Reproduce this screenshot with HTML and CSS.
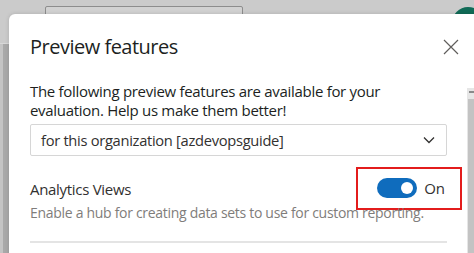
FILE: index.html
```html
<!DOCTYPE html>
<html lang="en">
  <head>
    <meta charset="UTF-8" />
    <title>Preview features</title>
    <link rel="stylesheet" href="styles.css">
  </head>
  <body>
    <header class="top-bar">
      <div class="search-box"></div>
      <div class="avatar"></div>
    </header>
    <div class="side-rail"></div>

    <!-- Dialog overlays the page -->
    <section class="dialog">
      <div class="dialog-header">
        <h1>Preview features</h1>
        <button class="close-btn" aria-label="Close">
          <svg width="16" height="16" viewBox="0 0 16 16">
            <path d="M1 1 L15 15 M15 1 L1 15" stroke="#605e5c" stroke-width="1.2" fill="none" />
          </svg>
        </button>
      </div>

      <div class="dialog-body">
        <p class="intro">The following preview features are available for your evaluation. Help us make them better!</p>

        <div class="scope-select">
          <span>for this organization [azdevopsguide]</span>
          <svg width="12" height="8" viewBox="0 0 12 8">
            <path d="M1 1.5 L6 6.5 L11 1.5" stroke="#323130" stroke-width="1.3" fill="none" />
          </svg>
        </div>

        <div class="feature">
          <div class="feature-row">
            <span class="feature-name">Analytics Views</span>
            <div class="toggle-wrap">
              <span class="toggle"><span class="knob"></span></span>
              <span class="toggle-label">On</span>
            </div>
          </div>
          <p class="feature-desc">Enable a hub for creating data sets to use for custom reporting.</p>
        </div>

        <hr class="divider">
      </div>

      <div class="scrollbar">
        <span class="scroll-arrow"></span>
        <span class="scroll-thumb"></span>
      </div>
    </section>
  </body>
</html>
```

FILE: styles.css
```css
* {
  margin: 0;
  padding: 0;
  box-sizing: border-box;
}

body {
  width: 474px;
  height: 253px;
  overflow: hidden;
  background-color: #b9b9b9;
  font-family: "Open Sans", "Noto Sans", sans-serif;
  color: #201f1e;
  position: relative;
}

/* page behind the dialog */
.top-bar {
  height: 44px;
  background-color: #cbcbcb;
  border-bottom: 1px solid #d8d8d8;
  position: relative;
}

.search-box {
  position: absolute;
  left: 45px;
  top: 6px;
  width: 198px;
  height: 20px;
  border: 1px solid #8d8d8d;
  border-radius: 2px;
  background-color: #d2d2d2;
}

.avatar {
  position: absolute;
  right: -10px;
  top: 7px;
  width: 32px;
  height: 32px;
  border-radius: 50%;
  background-color: #116b57;
}

.side-rail {
  width: 9px;
  height: 209px;
  background: linear-gradient(to right, #c4c4c4 0 3px, #a9a9a9 3px);
}

/* dialog */
.dialog {
  position: absolute;
  left: 9px;
  top: 14px;
  width: 480px;
  height: 260px;
  background-color: #ffffff;
  border-radius: 6px 0 0 0;
  box-shadow: 0 0 4px rgba(0, 0, 0, 0.15);
}

.dialog-header {
  display: flex;
  justify-content: space-between;
  align-items: center;
  padding: 19px 0 0 21px;
  width: 458px;
}

.dialog-header h1 {
  font-size: 20px;
  font-weight: 400;
  line-height: 28px;
  letter-spacing: -0.5px;
}

.close-btn {
  border: none;
  background: none;
  width: 16px;
  height: 16px;
  margin-right: 8px;
  display: flex;
}

.dialog-body {
  padding: 21px 0 0 21px;
  width: 438px;
}

.intro {
  font-size: 15px;
  line-height: 19px;
  font-weight: 500;
  color: #201f1e;
  letter-spacing: -0.3px;
  width: 390px;
}

.scope-select {
  margin-top: 4px;
  height: 32px;
  width: 417px;
  border: 1px solid #d6d6d6;
  border-radius: 2px;
  display: flex;
  align-items: center;
  justify-content: space-between;
  padding: 0 11px 0 10px;
  font-size: 14.7px;
  color: #323130;
  letter-spacing: -0.3px;
}

.feature {
  margin-top: 13px;
}

.feature-row {
  display: flex;
  justify-content: space-between;
  align-items: center;
}

.feature-name {
  font-size: 15px;
  color: #323130;
  letter-spacing: -0.3px;
}

.toggle-wrap {
  display: flex;
  align-items: center;
  gap: 7px;
  outline: 2px solid #e31c1c;
  padding: 9px 15px 10px 19px;
  margin-right: -13px;
}

.toggle {
  width: 40px;
  height: 20px;
  border-radius: 10px;
  background-color: #0f6cbd;
  display: flex;
  justify-content: flex-end;
  align-items: center;
  padding-right: 4px;
}

.knob {
  width: 12px;
  height: 12px;
  border-radius: 50%;
  background-color: #ffffff;
}

.toggle-label {
  font-size: 15px;
  color: #323130;
}

.feature-desc {
  margin-top: -5px;
  font-size: 14px;
  color: #7f7d7b;
  letter-spacing: -0.3px;
  white-space: nowrap;
}

.divider {
  margin-top: 19px;
  border: none;
  border-top: 2px solid #e4e4e4;
  width: 417px;
}

.scrollbar {
  position: absolute;
  left: 458px;
  top: 74px;
  width: 9px;
  height: 200px;
  background-color: #e6e6e6;
  display: flex;
  flex-direction: column;
  align-items: center;
}

.scroll-arrow {
  margin-top: 3px;
  width: 5px;
  height: 2px;
  background-color: #8a8a8a;
}

.scroll-thumb {
  margin-top: 6px;
  width: 8px;
  flex: 1;
  background-color: #c3c3c3;
}
```
